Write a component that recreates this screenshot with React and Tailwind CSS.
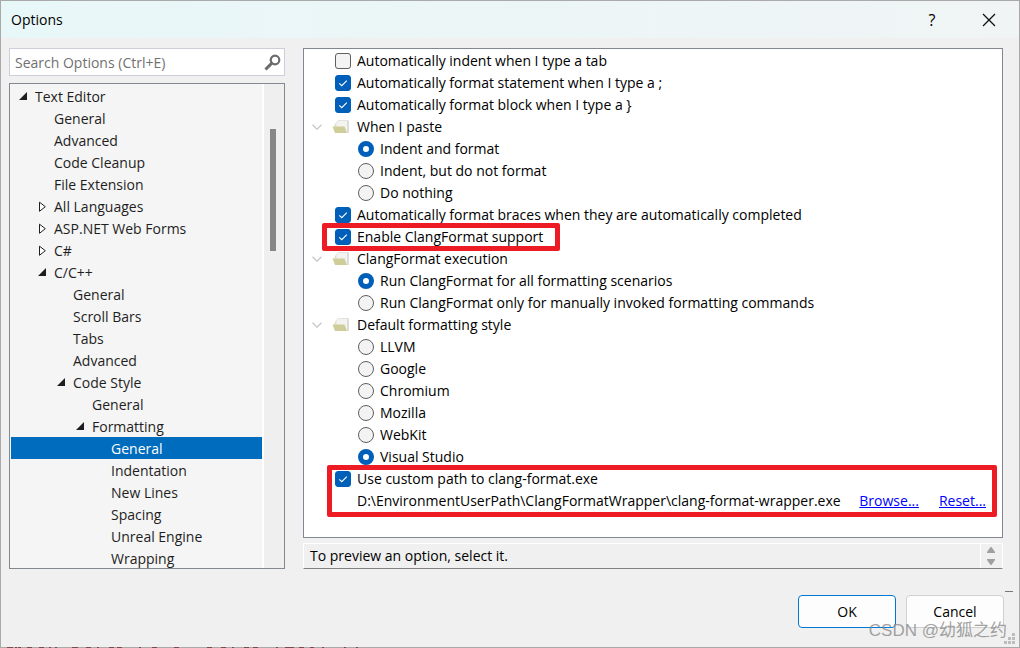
/**
 * OptionsDialog — C/C++ formatting page of the IDE options window.
 */
import { useState } from 'react';

const TREE = [
  { label: 'Text Editor', depth: 0, state: 'open' },
  { label: 'General', depth: 1 },
  { label: 'Advanced', depth: 1 },
  { label: 'Code Cleanup', depth: 1 },
  { label: 'File Extension', depth: 1 },
  { label: 'All Languages', depth: 1, state: 'closed' },
  { label: 'ASP.NET Web Forms', depth: 1, state: 'closed' },
  { label: 'C#', depth: 1, state: 'closed' },
  { label: 'C/C++', depth: 1, state: 'open' },
  { label: 'General', depth: 2 },
  { label: 'Scroll Bars', depth: 2 },
  { label: 'Tabs', depth: 2 },
  { label: 'Advanced', depth: 2 },
  { label: 'Code Style', depth: 2, state: 'open' },
  { label: 'General', depth: 3 },
  { label: 'Formatting', depth: 3, state: 'open' },
  { label: 'General', depth: 4, selected: true },
  { label: 'Indentation', depth: 4 },
  { label: 'New Lines', depth: 4 },
  { label: 'Spacing', depth: 4 },
  { label: 'Unreal Engine', depth: 4 },
  { label: 'Wrapping', depth: 4 },
];

const INDENT = ['pl-2', 'pl-[27px]', 'pl-[46px]', 'pl-[65px]', 'pl-[84px]'];

function Expander({ state }) {
  return (
    <svg viewBox="0 0 10 12" className="w-[10px] h-3 shrink-0" aria-hidden="true">
      {state === 'open' && <path d="M8 1V9H0Z" fill="#1e1e1e" />}
      {state === 'closed' && <path d="M1.5 1.2V10.3L7.3 5.7Z" fill="#fff" stroke="#1e1e1e" />}
    </svg>
  );
}

function FolderIcon() {
  return (
    <svg viewBox="0 0 18 16" className="w-[18px] h-4 shrink-0" aria-hidden="true">
      <path d="M4 4L6 1.5H16.5V13.5H4Z" fill="#f3f3f0" stroke="#e2e2de" />
      <path d="M15 2H17V14H15Z" fill="#dcdcdc" />
      <path d="M0.5 7.5H12.5L15 14H3Z" fill="#cfcd9a" />
      <path d="M3 5.5L4 4V7.5H2Z" fill="#dddcbc" />
    </svg>
  );
}

function Check({ label, defaultChecked }) {
  return (
    <label className="flex items-center h-[22px] pl-[31px] gap-[6px]">
      <span className="grid shrink-0">
        <input
          type="checkbox"
          defaultChecked={defaultChecked}
          className="peer col-start-1 row-start-1 appearance-none size-4 rounded-[3px] border border-[#5f5f5f] bg-[#f3f3f3] checked:bg-[#005fb8] checked:border-[#005fb8]"
        />
        <svg viewBox="0 0 16 16" className="col-start-1 row-start-1 size-4 pointer-events-none invisible peer-checked:visible">
          <path d="M4.3 8.3L6.8 10.7L11.8 5.7" fill="none" stroke="#fff" strokeWidth="1.1" />
        </svg>
      </span>
      {label}
    </label>
  );
}

function Radio({ name, label, defaultChecked }) {
  return (
    <label className="flex items-center h-[22px] pl-[54px] gap-[6px]">
      <input
        type="radio"
        name={name}
        defaultChecked={defaultChecked}
        className="appearance-none shrink-0 size-4 rounded-full border border-[#5f5f5f] bg-[#f3f3f3] checked:border-[5px] checked:border-[#005fb8] checked:bg-white"
      />
      {label}
    </label>
  );
}

function Group({ title, children }) {
  return (
    <fieldset>
      <legend className="flex items-center h-[22px] pl-2">
        <svg viewBox="0 0 10 6" className="w-[10px] h-[6px] mr-[10px] shrink-0" aria-hidden="true">
          <path d="M0.5 0.8L5 5.2L9.5 0.8" fill="none" stroke="#c8c8c8" strokeWidth="1.3" />
        </svg>
        <FolderIcon />
        <span className="pl-[7px]">{title}</span>
      </legend>
      {children}
    </fieldset>
  );
}

function Tree() {
  return (
    <div className="flex max-h-[486px] overflow-hidden border border-[#828790] bg-[#f5f5f5] text-[#1e1e1e]">
      <ul className="flex-1 pt-px pl-px border-r-2 border-r-white">
        {TREE.map((node, i) => (
          <li
            key={i}
            className={`flex items-center gap-[6px] h-[22px] pt-[2px] whitespace-nowrap ${INDENT[node.depth]} ${node.selected ? 'bg-[#006cbe] text-white' : ''}`}
          >
            <Expander state={node.state} />
            {node.label}
          </li>
        ))}
      </ul>
      <div className="w-5 bg-[#efefef] pl-[6px] pt-[45px]">
        <div className="w-[6px] h-[122px] bg-[#868686]" />
      </div>
    </div>
  );
}

export default function App() {
  const [query, setQuery] = useState('');

  return (
    <div className="relative min-h-screen flex flex-col border border-[#a9a9a9] bg-[#f0f0f0] font-['Open_Sans',sans-serif] text-sm text-black">
      <header className="flex items-center h-[37px] pl-[10px] pr-[23px] bg-linear-to-r from-[#e8f7f8] to-[#f0f4f5]">
        <h1 className="flex-1">Options</h1>
        <button aria-label="Help" className="w-4 mr-[42px] text-base">?</button>
        <button aria-label="Close">
          <svg viewBox="0 0 14 14" className="size-[14px]">
            <path d="M1 1L13 13M13 1L1 13" stroke="#111" strokeWidth="1.3" />
          </svg>
        </button>
      </header>

      <main className="flex gap-[18px] pt-[10px] pl-2 pr-4">
        <div className="w-[276px] shrink-0 flex flex-col gap-[7px]">
          <div className="flex items-center h-7 pl-[5px] pr-[3px] border border-[#ccceDB] bg-white">
            <input
              type="text"
              aria-label="Search Options"
              placeholder="Search Options (Ctrl+E)"
              value={query}
              onChange={(e) => setQuery(e.target.value)}
              className="flex-1 min-w-0 pt-[2px] outline-none placeholder:text-[#717171]"
            />
            <svg viewBox="0 0 17 17" className="size-[17px]" aria-hidden="true">
              <circle cx="11" cy="6" r="4.3" fill="none" stroke="#6b6b6b" strokeWidth="2.2" />
              <path d="M7.6 9.4L1.5 15.5" stroke="#6b6b6b" strokeWidth="3" />
            </svg>
          </div>
          <Tree />
        </div>

        <div className="flex-1 min-w-0 flex flex-col gap-[5px]">
          <div className="flex-1 pt-px border border-[#828790] bg-white whitespace-nowrap">
            <Check label="Automatically indent when I type a tab" />
            <Check label="Automatically format statement when I type a ;" defaultChecked />
            <Check label="Automatically format block when I type a }" defaultChecked />
            <Group title="When I paste">
              <Radio name="paste" label="Indent and format" defaultChecked />
              <Radio name="paste" label="Indent, but do not format" />
              <Radio name="paste" label="Do nothing" />
            </Group>
            <Check label="Automatically format braces when they are automatically completed" defaultChecked />
            <div className="relative">
              <Check label="Enable ClangFormat support" defaultChecked />
              <div className="absolute left-[18px] -top-[3px] -bottom-[3px] w-[238px] border-[5px] border-[#ed1c24] rounded-xs pointer-events-none" />
            </div>
            <Group title="ClangFormat execution">
              <Radio name="execution" label="Run ClangFormat for all formatting scenarios" defaultChecked />
              <Radio name="execution" label="Run ClangFormat only for manually invoked formatting commands" />
            </Group>
            <Group title="Default formatting style">
              <Radio name="style" label="LLVM" />
              <Radio name="style" label="Google" />
              <Radio name="style" label="Chromium" />
              <Radio name="style" label="Mozilla" />
              <Radio name="style" label="WebKit" />
              <Radio name="style" label="Visual Studio" defaultChecked />
            </Group>
            <div className="relative">
              <Check label="Use custom path to clang-format.exe" defaultChecked />
              <div className="flex items-center h-[22px] pl-[53px] pr-4">
                <span className="flex-1">D:\EnvironmentUserPath\ClangFormatWrapper\clang-format-wrapper.exe</span>
                <a href="#browse" className="mr-5 text-[#0000ff] underline">Browse...</a>
                <a href="#reset" className="text-[#0000ff] underline">Reset...</a>
              </div>
              <div className="absolute left-[23px] right-[5px] -top-[3px] -bottom-[5px] border-[5px] border-[#ed1c24] rounded-xs pointer-events-none" />
            </div>
          </div>
          <div className="flex h-[26px] border border-t-white border-x-white border-b-[#828282]">
            <p className="flex-1 pl-[6px] leading-6">To preview an option, select it.</p>
            <div className="w-[22px] pr-px border-l border-white flex flex-col items-center justify-center gap-[6px]">
              <svg viewBox="0 0 8 6" className="w-2 h-[6px]" aria-hidden="true"><path d="M0 6V5L3.5 0H4.5L8 5V6Z" fill="#a0a0a0" /></svg>
              <svg viewBox="0 0 8 6" className="w-2 h-[6px]" aria-hidden="true"><path d="M0 0V1L3.5 6H4.5L8 1V0Z" fill="#a0a0a0" /></svg>
            </div>
          </div>
        </div>
      </main>

      <footer className="flex justify-end gap-[10px] pt-[26px] pr-[15px]">
        <button className="w-[98px] h-[33px] rounded-sm border border-[#0078d4] bg-[#fdfdfd]">OK</button>
        <button className="w-[98px] h-[33px] rounded-sm border border-[#d0d0d0] bg-[#fdfdfd]">Cancel</button>
      </footer>

      {/* window edge: splitter tick, resize grip, code peeking out under the frame */}
      <div className="absolute right-[6px] bottom-[55px] w-2 h-px bg-[#777]" />
      <svg viewBox="0 0 12 12" className="absolute right-[3px] bottom-[2px] size-3" aria-hidden="true">
        <path d="M8 0h3v3h-3zM4 4h3v3h-3zM8 4h3v3h-3zM0 8h3v3h-3zM4 8h3v3h-3zM8 8h3v3h-3z" fill="#bdbdbd" />
      </svg>
      <svg viewBox="0 0 360 1" className="absolute left-0 -bottom-px w-[360px] h-px" aria-hidden="true">
        <path
          d="M6 .5h6M14 .5h2M17 .5h3M26 .5h5M38 .5h5M48 .5h2M54 .5h2M71 .5h6M85 .5h5M96 .5h2M108 .5h5M116 .5h5M138 .5h2M151 .5h5M173 .5h5M206 .5h5M220 .5h5M231 .5h2M243 .5h5M252 .5h5M275 .5h2M284 .5h9M298 .5h5M309 .5h4M321 .5h2M343 .5h2M355 .5h2"
          stroke="#7d4a4a"
        />
      </svg>
      <p className="absolute right-[12px] bottom-[4px] text-[17px] leading-6 text-[#8a8a8a]/80 font-['Liberation_Sans','Noto_Sans_CJK_SC',sans-serif]">
        CSDN @幼狐之约
      </p>
    </div>
  );
}
